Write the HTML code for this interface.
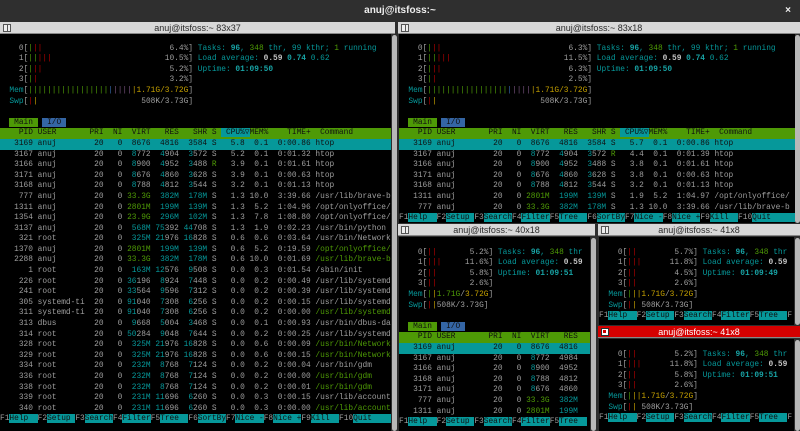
<!DOCTYPE html>
<html><head><meta charset="utf-8"><style>
*{margin:0;padding:0;box-sizing:border-box}
body{width:800px;height:431px;background:#2e2e2e;overflow:hidden;position:relative;font-family:"Liberation Sans",sans-serif}
.wt{position:absolute;left:0;top:0;width:800px;height:22px;background:#2f2f2f;color:#eee;font-weight:bold;font-size:10px;text-align:center;line-height:22px}
.wt .x{position:absolute;right:9px;top:0;font-weight:bold}
.tb{position:absolute;height:12px;background:#d8d8d8;color:#2a2a2a;font-size:9px;line-height:12px;text-align:center;border-bottom:1px solid #888}
.tb.red{background:#d40000;color:#fff}
.ic{position:absolute;left:3px;top:2px;width:8px;height:8px;border:1px solid #555;background:#eee}
.ic:after{content:"";position:absolute;left:3px;top:0;width:1px;height:6px;background:#555}
.tb.red .ic{background:#fff;border-color:#233}
.tb.red .ic:after{background:#c00;width:3px;height:3px;left:1px;top:1px}
.pn{position:absolute;background:#000;overflow:hidden}
pre{font-family:"Liberation Mono",monospace;font-size:7.85px;line-height:10.6px;color:#9e9e9e;white-space:pre}
.g{color:#4e9a06}.c{color:#06989a}.cb{color:#18a3a5;font-weight:bold}.r{color:#b00000}.y{color:#c4a000}.b{color:#3465a4}.m{color:#75507b}.w{color:#c4c4c4;font-weight:bold}
.hd{background:#4e9a06;color:#111;display:inline-block;width:100%}
.hd .s{background:#06989a}
.sel{background:#06989a;color:#111;display:inline-block;width:100%}
.f{background:#06989a;color:#111}
.tm{background:#4e9a06;color:#111}.ti{background:#3465a4;color:#111}
.sb{position:absolute;width:5px;background:#b8b8b8;border-radius:3px}
</style></head><body>
<div class="wt">anuj@itsfoss:~<span class="x">×</span></div>

<div class="tb" style="left:0;top:22px;width:395px"><span class="ic"></span>anuj@itsfoss:~ 83x37</div>
<div class="tb" style="left:398px;top:22px;width:402px"><span class="ic"></span>anuj@itsfoss:~ 83x18</div>
<div class="tb" style="left:398px;top:224px;width:197px"><span class="ic"></span>anuj@itsfoss:~ 40x18</div>
<div class="tb" style="left:598px;top:224px;width:202px"><span class="ic"></span>anuj@itsfoss:~ 41x8</div>
<div class="tb red" style="left:598px;top:326px;width:202px"><span class="ic"></span>anuj@itsfoss:~ 41x8</div>

<div class="pn" style="left:0;top:34px;width:391px;height:397px"><pre style="margin-top:-1px">

    0[<span class="g">|</span><span class="r">||</span>                           6.4%] <span class="c">Tasks: </span><span class="cb">96</span><span class="c">, </span><span class="g">348</span><span class="c"> thr, 99 kthr; </span><span class="g">1</span><span class="c"> running</span>
    1[<span class="g">||</span><span class="r">|||</span>                        10.5%] <span class="c">Load average: </span><span class="w">0.59</span> <span class="cb">0.74</span> <span class="c">0.62</span>
    2[<span class="g">|</span><span class="r">||</span>                           5.2%] <span class="c">Uptime: </span><span class="cb">01:09:50</span>
    3[<span class="g">|</span><span class="r">|</span>                            3.2%]
  <span class="c">Mem</span>[<span class="g">|||||||||||||||||</span><span class="b">|</span><span class="m">||||</span><span class="y">|1.71G/3.72G</span>]
  <span class="c">Swp</span>[<span class="r">|</span><span class="y">|</span>                      508K/3.73G]

  <span class="tm"> Main </span> <span class="ti"> I/O </span>
<span class="hd">    PID USER       PRI  NI  VIRT   RES   SHR S <span class="s"> CPU%▽</span>MEM%    TIME+  Command</span>
<span class="sel">   3169 anuj        20   0  8676  4816  3584 S   5.8  0.1  0:00.86 htop</span>
   3167 anuj        20   0  <span class="c">8</span>772  <span class="c">4</span>904  <span class="c">3</span>572 S   5.2  0.1  0:01.32 htop
   3166 anuj        20   0  <span class="c">8</span>900  <span class="c">4</span>952  <span class="c">3</span>488 <span class="g">R</span>   3.9  0.1  0:01.61 htop
   3171 anuj        20   0  <span class="c">8</span>676  <span class="c">4</span>860  <span class="c">3</span>628 S   3.9  0.1  0:00.63 htop
   3168 anuj        20   0  <span class="c">8</span>788  <span class="c">4</span>812  <span class="c">3</span>544 S   3.2  0.1  0:01.13 htop
    777 anuj        20   0 <span class="g">33.3G</span>  <span class="c">382M</span>  <span class="c">178M</span> S   1.3 10.0  3:39.66 /usr/lib/brave-b
   1311 anuj        20   0 <span class="g">2801M</span>  <span class="c">199M</span>  <span class="c">139M</span> S   1.3  5.2  1:04.96 /opt/onlyoffice/
   1354 anuj        20   0 <span class="g">23.9G</span>  <span class="c">296M</span>  <span class="c">102M</span> S   1.3  7.8  1:08.80 /opt/onlyoffice/
   3137 anuj        20   0  <span class="c">568M</span> <span class="c">75</span>392 <span class="c">44</span>708 S   1.3  1.9  0:02.23 /usr/bin/python
    321 root        20   0  <span class="c">325M</span> <span class="c">21</span>976 <span class="c">16</span>828 S   0.6  0.6  0:03.64 /usr/bin/Network
   1370 anuj        20   0 <span class="g">2801M</span>  <span class="c">199M</span>  <span class="c">139M</span> S   0.6  5.2  0:19.59 <span class="g">/opt/onlyoffice/</span>
   2288 anuj        20   0 <span class="g">33.3G</span>  <span class="c">382M</span>  <span class="c">178M</span> S   0.6 10.0  0:01.69 <span class="g">/usr/lib/brave-b</span>
      1 root        20   0  <span class="c">163M</span> <span class="c">12</span>576  <span class="c">9</span>508 S   0.0  0.3  0:01.54 /sbin/init
    226 root        20   0 <span class="c">36</span>196  <span class="c">8</span>924  <span class="c">7</span>448 S   0.0  0.2  0:00.49 /usr/lib/systemd
    241 root        20   0 <span class="c">33</span>564  <span class="c">9</span>596  <span class="c">7</span>312 S   0.0  0.2  0:00.39 /usr/lib/systemd
    305 systemd-ti  20   0 <span class="c">91</span>040  <span class="c">7</span>308  <span class="c">6</span>256 S   0.0  0.2  0:00.15 /usr/lib/systemd
    311 systemd-ti  20   0 <span class="c">91</span>040  <span class="c">7</span>308  <span class="c">6</span>256 S   0.0  0.2  0:00.00 <span class="g">/usr/lib/systemd</span>
    313 dbus        20   0  <span class="c">9</span>668  <span class="c">5</span>004  <span class="c">3</span>468 S   0.0  0.1  0:00.93 /usr/bin/dbus-da
    314 root        20   0 <span class="c">50</span>284  <span class="c">9</span>048  <span class="c">7</span>644 S   0.0  0.2  0:00.25 /usr/lib/systemd
    328 root        20   0  <span class="c">325M</span> <span class="c">21</span>976 <span class="c">16</span>828 S   0.0  0.6  0:00.09 <span class="g">/usr/bin/Network</span>
    329 root        20   0  <span class="c">325M</span> <span class="c">21</span>976 <span class="c">16</span>828 S   0.0  0.6  0:00.15 <span class="g">/usr/bin/Network</span>
    334 root        20   0  <span class="c">232M</span>  <span class="c">8</span>768  <span class="c">7</span>124 S   0.0  0.2  0:00.04 /usr/bin/gdm
    336 root        20   0  <span class="c">232M</span>  <span class="c">8</span>768  <span class="c">7</span>124 S   0.0  0.2  0:00.00 <span class="g">/usr/bin/gdm</span>
    338 root        20   0  <span class="c">232M</span>  <span class="c">8</span>768  <span class="c">7</span>124 S   0.0  0.2  0:00.01 <span class="g">/usr/bin/gdm</span>
    339 root        20   0  <span class="c">231M</span> <span class="c">11</span>696  <span class="c">6</span>260 S   0.0  0.3  0:00.15 /usr/lib/account
    340 root        20   0  <span class="c">231M</span> <span class="c">11</span>696  <span class="c">6</span>260 S   0.0  0.3  0:00.00 <span class="g">/usr/lib/account</span>
F1<span class="f">Help  </span>F2<span class="f">Setup </span>F3<span class="f">Search</span>F4<span class="f">Filter</span>F5<span class="f">Tree  </span>F6<span class="f">SortBy</span>F7<span class="f">Nice -</span>F8<span class="f">Nice +</span>F9<span class="f">Kill  </span>F10<span class="f">Quit      </span></pre></div>
<div class="sb" style="left:392px;top:35px;height:396px"></div>

<div class="pn" style="left:399px;top:34px;width:396px;height:189px"><pre style="margin-top:-1px">

    0[<span class="g">|</span><span class="r">||</span>                           6.3%] <span class="c">Tasks: </span><span class="cb">96</span><span class="c">, </span><span class="g">348</span><span class="c"> thr, 99 kthr; </span><span class="g">1</span><span class="c"> running</span>
    1[<span class="g">||</span><span class="r">|||</span>                        11.5%] <span class="c">Load average: </span><span class="w">0.59</span> <span class="cb">0.74</span> <span class="c">0.62</span>
    2[<span class="g">|</span><span class="r">||</span>                           6.3%] <span class="c">Uptime: </span><span class="cb">01:09:50</span>
    3[<span class="g">|</span><span class="r">|</span>                            2.5%]
  <span class="c">Mem</span>[<span class="g">|||||||||||||||||</span><span class="b">|</span><span class="m">||||</span><span class="y">|1.71G/3.72G</span>]
  <span class="c">Swp</span>[<span class="r">|</span><span class="y">|</span>                      508K/3.73G]

  <span class="tm"> Main </span> <span class="ti"> I/O </span>
<span class="hd">    PID USER       PRI  NI  VIRT   RES   SHR S <span class="s"> CPU%▽</span>MEM%    TIME+  Command</span>
<span class="sel">   3169 anuj        20   0  8676  4816  3584 S   5.7  0.1  0:00.86 htop</span>
   3167 anuj        20   0  <span class="c">8</span>772  <span class="c">4</span>904  <span class="c">3</span>572 <span class="g">R</span>   4.4  0.1  0:01.39 htop
   3166 anuj        20   0  <span class="c">8</span>900  <span class="c">4</span>952  <span class="c">3</span>488 S   3.8  0.1  0:01.61 htop
   3171 anuj        20   0  <span class="c">8</span>676  <span class="c">4</span>860  <span class="c">3</span>628 S   3.8  0.1  0:00.63 htop
   3168 anuj        20   0  <span class="c">8</span>788  <span class="c">4</span>812  <span class="c">3</span>544 S   3.2  0.1  0:01.13 htop
   1311 anuj        20   0 <span class="g">2801M</span>  <span class="c">199M</span>  <span class="c">139M</span> S   1.9  5.2  1:04.97 /opt/onlyoffice/
    777 anuj        20   0 <span class="g">33.3G</span>  <span class="c">382M</span>  <span class="c">178M</span> S   1.3 10.0  3:39.66 /usr/lib/brave-b
F1<span class="f">Help  </span>F2<span class="f">Setup </span>F3<span class="f">Search</span>F4<span class="f">Filter</span>F5<span class="f">Tree  </span>F6<span class="f">SortBy</span>F7<span class="f">Nice -</span>F8<span class="f">Nice +</span>F9<span class="f">Kill  </span>F10<span class="f">Quit      </span></pre></div>
<div class="sb" style="left:795px;top:35px;height:188px"></div>

<div class="pn" style="left:399px;top:237px;width:191px;height:194px"><pre>

    0[<span class="r">||</span>       5.2%] <span class="c">Tasks: </span><span class="cb">96</span><span class="c">, </span><span class="g">348</span><span class="c"> thr</span>
    1[<span class="r">|||</span>     11.6%] <span class="c">Load average: </span><span class="w">0.59</span>
    2[<span class="r">||</span>       5.8%] <span class="c">Uptime: </span><span class="cb">01:09:51</span>
    3[<span class="r">||</span>       2.6%]
  <span class="c">Mem</span>[<span class="g">|</span><span class="y">|</span><span class="g">1.71G</span>/<span class="y">3.72G</span>]
  <span class="c">Swp</span>[<span class="r">|</span><span class="y">|</span>508K/3.73G]

  <span class="tm"> Main </span> <span class="ti"> I/O </span>
<span class="hd">    PID USER       PRI  NI  VIRT   RES</span>
<span class="sel">   3169 anuj        20   0  8676  4816</span>
   3167 anuj        20   0  <span class="c">8</span>772  4984
   3166 anuj        20   0  <span class="c">8</span>900  4952
   3168 anuj        20   0  <span class="c">8</span>788  4812
   3171 anuj        20   0  <span class="c">8</span>676  4860
    777 anuj        20   0 <span class="g">33.3G</span>  <span class="c">382M</span>
   1311 anuj        20   0 <span class="g">2801M</span>  <span class="c">199M</span>
F1<span class="f">Help  </span>F2<span class="f">Setup </span>F3<span class="f">Search</span>F4<span class="f">Filter</span>F5<span class="f">Tree  </span></pre></div>
<div class="sb" style="left:591px;top:238px;height:193px"></div>

<div class="pn" style="left:599px;top:237px;width:195px;height:88px"><pre>

    0[<span class="r">||</span>        5.7%] <span class="c">Tasks: </span><span class="cb">96</span><span class="c">, </span><span class="g">348</span><span class="c"> thr</span>
    1[<span class="r">|||</span>      11.8%] <span class="c">Load average: </span><span class="w">0.59</span>
    2[<span class="r">||</span>        4.5%] <span class="c">Uptime: </span><span class="cb">01:09:49</span>
    3[<span class="r">||</span>        2.6%]
  <span class="c">Mem</span>[<span class="g">|</span><span class="y">||</span><span class="y">1.71G</span>/<span class="y">3.72G</span>]
  <span class="c">Swp</span>[<span class="r">|</span><span class="y">|</span> 508K/3.73G]
F1<span class="f">Help  </span>F2<span class="f">Setup </span>F3<span class="f">Search</span>F4<span class="f">Filter</span>F5<span class="f">Tree  </span>F</pre></div>
<div class="sb" style="left:795px;top:238px;height:87px"></div>

<div class="pn" style="left:599px;top:339px;width:195px;height:92px"><pre>

    0[<span class="r">||</span>        5.2%] <span class="c">Tasks: </span><span class="cb">96</span><span class="c">, </span><span class="g">348</span><span class="c"> thr</span>
    1[<span class="r">|||</span>      11.8%] <span class="c">Load average: </span><span class="w">0.59</span>
    2[<span class="r">||</span>        5.8%] <span class="c">Uptime: </span><span class="cb">01:09:51</span>
    3[<span class="r">||</span>        2.6%]
  <span class="c">Mem</span>[<span class="g">|</span><span class="y">||</span><span class="y">1.71G</span>/<span class="y">3.72G</span>]
  <span class="c">Swp</span>[<span class="r">|</span><span class="y">|</span> 508K/3.73G]
F1<span class="f">Help  </span>F2<span class="f">Setup </span>F3<span class="f">Search</span>F4<span class="f">Filter</span>F5<span class="f">Tree  </span>F</pre></div>
<div class="sb" style="left:795px;top:340px;height:91px"></div>
</body></html>
